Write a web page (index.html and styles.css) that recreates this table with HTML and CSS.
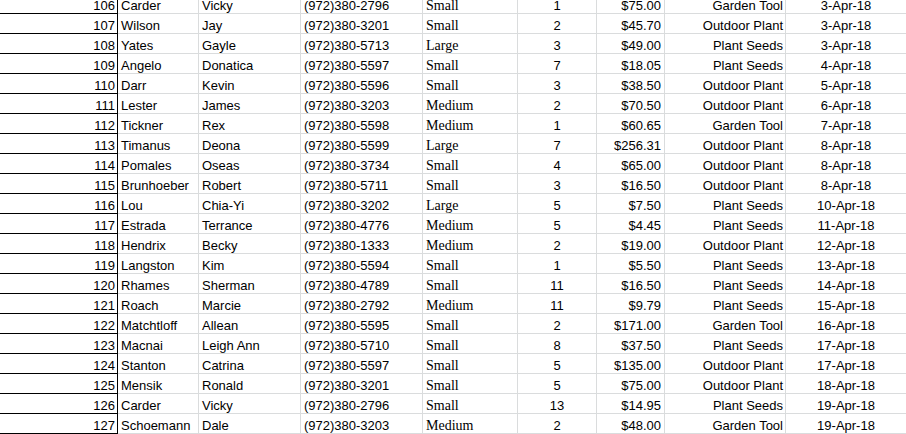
FILE: index.html
```html
<!DOCTYPE html>
<html>
<head>
<meta charset="utf-8">
<link rel="stylesheet" href="styles.css">
</head>
<body>
<div class="viewport">
<div class="sheet">
<div class="row"><span>106</span><span>Carder</span><span>Vicky</span><span>(972)380-2796</span><span>Small</span><span>1</span><span>$75.00</span><span>Garden Tool</span><span>3-Apr-18</span></div>
<div class="row"><span>107</span><span>Wilson</span><span>Jay</span><span>(972)380-3201</span><span>Small</span><span>2</span><span>$45.70</span><span>Outdoor Plant</span><span>3-Apr-18</span></div>
<div class="row"><span>108</span><span>Yates</span><span>Gayle</span><span>(972)380-5713</span><span>Large</span><span>3</span><span>$49.00</span><span>Plant Seeds</span><span>3-Apr-18</span></div>
<div class="row"><span>109</span><span>Angelo</span><span>Donatica</span><span>(972)380-5597</span><span>Small</span><span>7</span><span>$18.05</span><span>Plant Seeds</span><span>4-Apr-18</span></div>
<div class="row"><span>110</span><span>Darr</span><span>Kevin</span><span>(972)380-5596</span><span>Small</span><span>3</span><span>$38.50</span><span>Outdoor Plant</span><span>5-Apr-18</span></div>
<div class="row"><span>111</span><span>Lester</span><span>James</span><span>(972)380-3203</span><span>Medium</span><span>2</span><span>$70.50</span><span>Outdoor Plant</span><span>6-Apr-18</span></div>
<div class="row"><span>112</span><span>Tickner</span><span>Rex</span><span>(972)380-5598</span><span>Medium</span><span>1</span><span>$60.65</span><span>Garden Tool</span><span>7-Apr-18</span></div>
<div class="row"><span>113</span><span>Timanus</span><span>Deona</span><span>(972)380-5599</span><span>Large</span><span>7</span><span>$256.31</span><span>Outdoor Plant</span><span>8-Apr-18</span></div>
<div class="row"><span>114</span><span>Pomales</span><span>Oseas</span><span>(972)380-3734</span><span>Small</span><span>4</span><span>$65.00</span><span>Outdoor Plant</span><span>8-Apr-18</span></div>
<div class="row"><span>115</span><span>Brunhoeber</span><span>Robert</span><span>(972)380-5711</span><span>Small</span><span>3</span><span>$16.50</span><span>Outdoor Plant</span><span>8-Apr-18</span></div>
<div class="row"><span>116</span><span>Lou</span><span>Chia-Yi</span><span>(972)380-3202</span><span>Large</span><span>5</span><span>$7.50</span><span>Plant Seeds</span><span>10-Apr-18</span></div>
<div class="row"><span>117</span><span>Estrada</span><span>Terrance</span><span>(972)380-4776</span><span>Medium</span><span>5</span><span>$4.45</span><span>Plant Seeds</span><span>11-Apr-18</span></div>
<div class="row"><span>118</span><span>Hendrix</span><span>Becky</span><span>(972)380-1333</span><span>Medium</span><span>2</span><span>$19.00</span><span>Outdoor Plant</span><span>12-Apr-18</span></div>
<div class="row"><span>119</span><span>Langston</span><span>Kim</span><span>(972)380-5594</span><span>Small</span><span>1</span><span>$5.50</span><span>Plant Seeds</span><span>13-Apr-18</span></div>
<div class="row"><span>120</span><span>Rhames</span><span>Sherman</span><span>(972)380-4789</span><span>Small</span><span>11</span><span>$16.50</span><span>Plant Seeds</span><span>14-Apr-18</span></div>
<div class="row"><span>121</span><span>Roach</span><span>Marcie</span><span>(972)380-2792</span><span>Medium</span><span>11</span><span>$9.79</span><span>Plant Seeds</span><span>15-Apr-18</span></div>
<div class="row"><span>122</span><span>Matchtloff</span><span>Allean</span><span>(972)380-5595</span><span>Small</span><span>2</span><span>$171.00</span><span>Garden Tool</span><span>16-Apr-18</span></div>
<div class="row"><span>123</span><span>Macnai</span><span>Leigh Ann</span><span>(972)380-5710</span><span>Small</span><span>8</span><span>$37.50</span><span>Plant Seeds</span><span>17-Apr-18</span></div>
<div class="row"><span>124</span><span>Stanton</span><span>Catrina</span><span>(972)380-5597</span><span>Small</span><span>5</span><span>$135.00</span><span>Outdoor Plant</span><span>17-Apr-18</span></div>
<div class="row"><span>125</span><span>Mensik</span><span>Ronald</span><span>(972)380-3201</span><span>Small</span><span>5</span><span>$75.00</span><span>Outdoor Plant</span><span>18-Apr-18</span></div>
<div class="row"><span>126</span><span>Carder</span><span>Vicky</span><span>(972)380-2796</span><span>Small</span><span>13</span><span>$14.95</span><span>Plant Seeds</span><span>19-Apr-18</span></div>
<div class="row"><span>127</span><span>Schoemann</span><span>Dale</span><span>(972)380-3203</span><span>Medium</span><span>2</span><span>$48.00</span><span>Garden Tool</span><span>19-Apr-18</span></div>
</div>
</div>
</body>
</html>
```

FILE: styles.css
```css
html, body {
  margin: 0;
  padding: 0;
  background: #ffffff;
  overflow: hidden;
}
.viewport {
  width: 906px;
  height: 434px;
  overflow: hidden;
}
.sheet {
  margin-top: -6px;
  font-family: "Liberation Sans", Arial, sans-serif;
  font-size: 13px;
  color: #000;
}
.row {
  display: grid;
  grid-template-columns: 118px 81px 102px 122px 95px 79px 68px 121px 121px;
  height: 20px;
}
.row > span {
  box-sizing: border-box;
  border-right: 1px solid #dadcdd;
  border-bottom: 1px solid #dadcdd;
  display: flex;
  align-items: flex-end;
  line-height: 15px;
  white-space: nowrap;
  overflow: hidden;
  padding: 0 3px;
}
.row > span:nth-child(1) {
  border-right-color: #000;
  border-bottom-color: #000;
  justify-content: flex-end;
  padding-right: 2px;
}
.row > span:nth-child(5) {
  font-family: "Liberation Serif", "Times New Roman", serif;
  font-size: 14px;
}
.row > span:nth-child(6),
.row > span:nth-child(9) {
  justify-content: center;
}
.row > span:nth-child(7) {
  justify-content: flex-end;
  padding-right: 3px;
}
.row > span:nth-child(8) {
  justify-content: flex-end;
  padding-right: 2px;
}
```
